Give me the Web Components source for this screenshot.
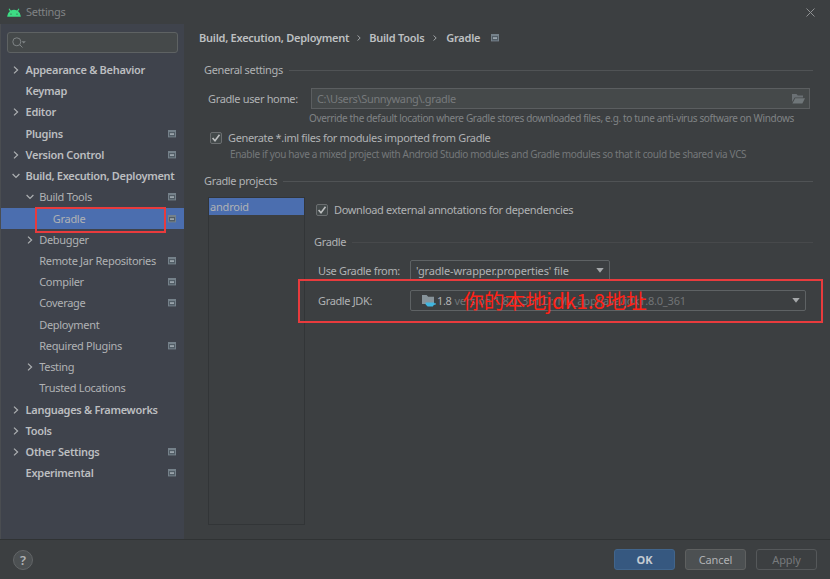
<!DOCTYPE html>
<html lang="en">
<head>
<meta charset="utf-8">
<title>Settings</title>
<style>
  html, body { margin: 0; height: 100%; overflow: hidden; background: #3c3f41; }
  body { font: 11px/16px "Noto Sans", "Open Sans", sans-serif; color: #b0b2b4; }
</style>
</head>
<body>
<settings-window></settings-window>

<script>
// Base class: every element renders its template string once
class BaseElement extends HTMLElement {
  constructor() {
    super();
    this.attachShadow({ mode: 'open' });
  }

  connectedCallback() {
    this.shadowRoot.innerHTML = this.template();
  }
}

const ICONS = {
  android: [14, 9, '<path fill="#3ddc84" d="M.3 8.8a6.7 6.2 0 0 1 2.6-5.6L1.6 1l.8-.5 1.5 2a7.7 7.7 0 0 1 6.2 0l1.5-2 .8.5-1.3 2.2a6.7 6.2 0 0 1 2.6 5.6z"/><circle cx="4" cy="6.1" r=".6" fill="#3c3f41"/><circle cx="10" cy="6.1" r=".6" fill="#3c3f41"/>'],
  close: [9, 9, '<path d="M.5.5l8 8M8.5.5l-8 8" stroke="#8f9193" fill="none"/>'],
  search: [15, 12, '<circle cx="4.8" cy="4.8" r="4" stroke="#7f8486" fill="none"/><path d="M7.7 7.7l2.8 2.8" stroke="#7f8486"/><path d="M9.6 4.2h4.2l-2.1 2.3z" fill="#7f8486"/>'],
  right: [6, 8, '<path d="M1 .6l3.6 3.4L1 7.4" stroke="#adb0b2" stroke-width="1.2" fill="none"/>'],
  down: [8, 6, '<path d="M.6 1L4 4.5 7.4 1" stroke="#adb0b2" stroke-width="1.2" fill="none"/>'],
  project: [8, 8, '<path fill="#75818a" d="M0 0h8v7.4H0z"/><path fill="#525d66" d="M1 2h6v4.4H1z"/><path fill="#9aa4ab" d="M2 3.2h4v1.8H2z"/>'],
  folder: [13, 10, '<path fill="#6a7074" d="M0 0h4.5l1.3 1.5H11v2H2.7L0 8z"/><path fill="#6f7679" d="M3.2 4.3H13L10.4 9.5H.4z"/>'],
  jdk: [14, 12, '<path fill="#87939a" d="M0 0h4.6l1.6 1.7H12V9H0z"/><path fill="#40b6e0" d="M3.6 7.6h8.6v.7h1.6v1.2l-2 .5-1 1.4H5.6L3.6 9.6z"/>'],
  arrow: [8, 5, '<path d="M.3 0h7.4L4 4.7z" fill="#a5a8aa"/>'],
  check: [12, 12, '<path d="M2.6 5.9L5 8.7 9.5 2.8" stroke="#bec0c1" stroke-width="1.6" fill="none"/>']
};

class UiIcon extends BaseElement {
  template() {
    const [w, h, body] = ICONS[this.getAttribute('name')];
    return `
      <style>:host { display: block; flex: none; } svg { display: block; }</style>
      <svg width="${w}" height="${h}" viewBox="0 0 ${w} ${h}">${body}</svg>`;
  }
}

class TreeRow extends BaseElement {
  template() {
    const level = Number(this.getAttribute('level') ?? 0);
    const state = this.getAttribute('state');
    return `
      <style>
        :host { display: flex; align-items: center; height: 21.22px; padding: 0 8px 0 ${10 + level * 13.6}px; white-space: nowrap; }
        :host([level="0"]) { font-weight: 600; color: #bcbec0; }
        :host([selected]) { background: #4b6eaf; }
        .toggle { width: 14.6px; flex: none; display: flex; justify-content: center; padding-right: 2px; box-sizing: border-box; margin-left: -1px; margin-right: 1px; }
        .label { flex: 1; }
      </style>
      <div class="toggle">${state ? `<ui-icon name="${state}"></ui-icon>` : ''}</div>
      <div class="label"><slot></slot></div>
      ${this.hasAttribute('project') ? '<ui-icon name="project"></ui-icon>' : ''}`;
  }
}

class SearchBox extends BaseElement {
  template() {
    return `
      <style>
        :host { display: flex; align-items: center; box-sizing: border-box; height: 21px; margin: 8px 6px 0; padding-left: 4px; border: 1px solid #5e6263; border-radius: 3px; background: #45494a; }
      </style>
      <ui-icon name="search"></ui-icon>`;
  }
}

class SectionTitle extends BaseElement {
  template() {
    return `
      <style>
        :host { display: flex; align-items: center; gap: 6px; height: 16px; white-space: nowrap; }
        .line { flex: 1; height: 1px; background: var(--line, #505355); }
      </style>
      <slot></slot><div class="line"></div>`;
  }
}

class CheckBox extends BaseElement {
  template() {
    return `
      <style>
        :host { display: flex; align-items: center; gap: 6px; height: 16px; white-space: nowrap; }
        .box { box-sizing: border-box; width: 12px; height: 12px; border: 1px solid #6b6e70; border-radius: 2px; background: #43494a; display: grid; place-content: center; }
      </style>
      <div class="box"><ui-icon name="check"></ui-icon></div><slot></slot>`;
  }
}

class ComboBox extends BaseElement {
  template() {
    return `
      <style>
        :host { display: flex; align-items: center; box-sizing: border-box; height: 21px; padding: 0 5px; border: 1px solid #5e6264; border-radius: 2px; white-space: nowrap; }
        .value { flex: 1; display: flex; align-items: center; }
      </style>
      <div class="value"><slot></slot></div><ui-icon name="arrow"></ui-icon>`;
  }
}

class PushButton extends BaseElement {
  template() {
    return `
      <style>
        :host { display: grid; place-content: center; box-sizing: border-box; width: 61px; height: 21px; border: 1px solid #5e6060; border-radius: 3px; background: #4c5052; }
        :host([kind="primary"]) { background: #365880; border-color: #41658c; font-weight: 700; color: #c4cbd2; }
        :host([kind="disabled"]) { background: none; border-color: #55585a; color: #777a7c; }
      </style>
      <slot></slot>`;
  }
}

class SettingsSidebar extends BaseElement {
  template() {
    return `
      <style>
        :host { display: block; position: relative; width: 184px; box-sizing: border-box; border-left: 1px solid #4a4d51; background: #3f434c; letter-spacing: -.3px; }
        nav { padding-top: 6.4px; }
        .mark { position: absolute; left: 34px; top: 183px; width: 131px; height: 26px; box-sizing: border-box; border: 2px solid #e83b3d; }
      </style>
      <search-box></search-box>
      <nav>
        <tree-row level="0" state="right">Appearance &amp; Behavior</tree-row>
        <tree-row level="0">Keymap</tree-row>
        <tree-row level="0" state="right">Editor</tree-row>
        <tree-row level="0" project>Plugins</tree-row>
        <tree-row level="0" state="right" project>Version Control</tree-row>
        <tree-row level="0" state="down">Build, Execution, Deployment</tree-row>
        <tree-row level="1" state="down" project>Build Tools</tree-row>
        <tree-row level="2" selected project>Gradle</tree-row>
        <tree-row level="1" state="right">Debugger</tree-row>
        <tree-row level="1" project>Remote Jar Repositories</tree-row>
        <tree-row level="1" project>Compiler</tree-row>
        <tree-row level="1" project>Coverage</tree-row>
        <tree-row level="1">Deployment</tree-row>
        <tree-row level="1" project>Required Plugins</tree-row>
        <tree-row level="1" state="right">Testing</tree-row>
        <tree-row level="1">Trusted Locations</tree-row>
        <tree-row level="0" state="right">Languages &amp; Frameworks</tree-row>
        <tree-row level="0" state="right">Tools</tree-row>
        <tree-row level="0" state="right" project>Other Settings</tree-row>
        <tree-row level="0" project>Experimental</tree-row>
      </nav>
      <div class="mark"></div>`;
  }
}

class GradlePage extends BaseElement {
  template() {
    return `
      <style>
        :host { display: block; flex: 1; min-width: 0; white-space: nowrap; letter-spacing: -.35px; }
        .crumbs { display: flex; align-items: center; height: 16px; margin: 6px 0 0 15px; font-weight: 600; color: #bec0c1; letter-spacing: -.25px; }
        .crumbs .sep { margin: 0 7px; transform: scale(.75); }
        .crumbs .last { margin: 0 8px; }
        .crumbs .project { margin-left: 11px; }
        .general { margin: 16px 17px 0 20px; }
        .home { display: flex; align-items: center; margin: 10px 20px 0 24px; }
        .home label { width: 103px; }
        .field { flex: 1; height: 21px; box-sizing: border-box; display: flex; align-items: center; justify-content: space-between; padding: 0 4px 0 5px; border: 1px solid #5b5e60; background: #45494a; color: #777a7c; }
        .hint { font-size: 10px; color: #808385; height: 16px; }
        .h1 { margin: 1px 0 0 125px; }
        .iml { margin: 4px 0 0 26px; }
        .h2 { margin: 0 0 0 46px; color: #75787a; letter-spacing: -.33px; }
        .projects { margin: 11px 17px 0 20px; }
        .body { display: flex; margin: 8px 0 0 24px; }
        .list { width: 97px; height: 328px; box-sizing: border-box; border: 1px solid #323537; }
        .item { background: #4b6eaf; height: 17px; line-height: 17px; padding-left: 1px; letter-spacing: -.2px; }
        .detail { flex: 1; padding: 5px 0 0 11px; }
        .sub { margin: 16px 17px 0 -2px; --line: #47494b; }
        .row { display: flex; align-items: center; margin-left: 2px; }
        .row label { width: 92px; }
        .use { margin-top: 10px; }
        .use combo-box { width: 200px; letter-spacing: -.16px; }
        .jdk { margin-top: 9px; position: relative; }
        .jdk combo-box { width: 396px; }
        .jdk ui-icon { margin: 1px 1px 0 6px; }
        .ver { color: #717476; margin-left: 3px; letter-spacing: -.2px; }
        .frame { position: absolute; left: -20px; top: -11px; width: 525px; height: 44px; box-sizing: border-box; border: 2px solid #e83b3d; }
        .note { position: absolute; left: 145px; top: -3px; font: 20.8px/26px "Noto Sans CJK SC", sans-serif; letter-spacing: 0; color: #ff2116; }
      </style>
      <div class="crumbs">
        <span>Build, Execution, Deployment</span><ui-icon class="sep" name="right"></ui-icon>
        <span>Build Tools</span><ui-icon class="sep last" name="right"></ui-icon>
        <span>Gradle</span><ui-icon class="project" name="project"></ui-icon>
      </div>
      <section-title class="general">General settings</section-title>
      <div class="home">
        <label>Gradle user home:</label>
        <div class="field"><span>C:\\Users\\Sunnywang\\.gradle</span><ui-icon name="folder"></ui-icon></div>
      </div>
      <div class="hint h1">Override the default location where Gradle stores downloaded files, e.g. to tune anti-virus software on Windows</div>
      <check-box class="iml">Generate *.iml files for modules imported from Gradle</check-box>
      <div class="hint h2">Enable if you have a mixed project with Android Studio modules and Gradle modules so that it could be shared via VCS</div>
      <section-title class="projects">Gradle projects</section-title>
      <div class="body">
        <div class="list"><div class="item">android</div></div>
        <div class="detail">
          <check-box class="ann">Download external annotations for dependencies</check-box>
          <section-title class="sub">Gradle</section-title>
          <div class="row use"><label>Use Gradle from:</label><combo-box>'gradle-wrapper.properties' file</combo-box></div>
          <div class="row jdk">
            <label>Gradle JDK:</label>
            <combo-box><ui-icon name="jdk"></ui-icon>1.8 <span class="ver">version 1.8.0_361 D:/My_app/java/jdk1.8.0_361</span></combo-box>
            <div class="frame"></div>
            <div class="note">你的本地jdk1.8地址</div>
          </div>
        </div>
      </div>`;
  }
}

class SettingsWindow extends BaseElement {
  template() {
    return `
      <style>
        :host { display: flex; flex-direction: column; width: 830px; height: 579px; background: #3c3f41; }
        header { display: flex; align-items: center; height: 24px; padding: 0 15px 0 7px; color: #808385; }
        header span { flex: 1; margin-left: 5px; letter-spacing: -.3px; }
        main { display: flex; height: 515px; }
        footer { display: flex; align-items: center; gap: 10px; height: 39px; padding: 0 13px 0 13px; border-top: 1px solid #303334; letter-spacing: -.1px; }
        .help { box-sizing: border-box; width: 20px; height: 20px; border: 1px solid #626567; border-radius: 50%; background: #4c5052; display: grid; place-content: center; font-size: 13px; font-weight: 600; margin-right: auto; }
      </style>
      <header><ui-icon name="android"></ui-icon><span>Settings</span><ui-icon name="close"></ui-icon></header>
      <main><settings-sidebar></settings-sidebar><gradle-page></gradle-page></main>
      <footer>
        <div class="help">?</div>
        <push-button kind="primary">OK</push-button>
        <push-button>Cancel</push-button>
        <push-button kind="disabled">Apply</push-button>
      </footer>`;
  }
}

customElements.define('ui-icon', UiIcon);
customElements.define('tree-row', TreeRow);
customElements.define('search-box', SearchBox);
customElements.define('section-title', SectionTitle);
customElements.define('check-box', CheckBox);
customElements.define('combo-box', ComboBox);
customElements.define('push-button', PushButton);
customElements.define('settings-sidebar', SettingsSidebar);
customElements.define('gradle-page', GradlePage);
customElements.define('settings-window', SettingsWindow);
</script>
</body>
</html>
